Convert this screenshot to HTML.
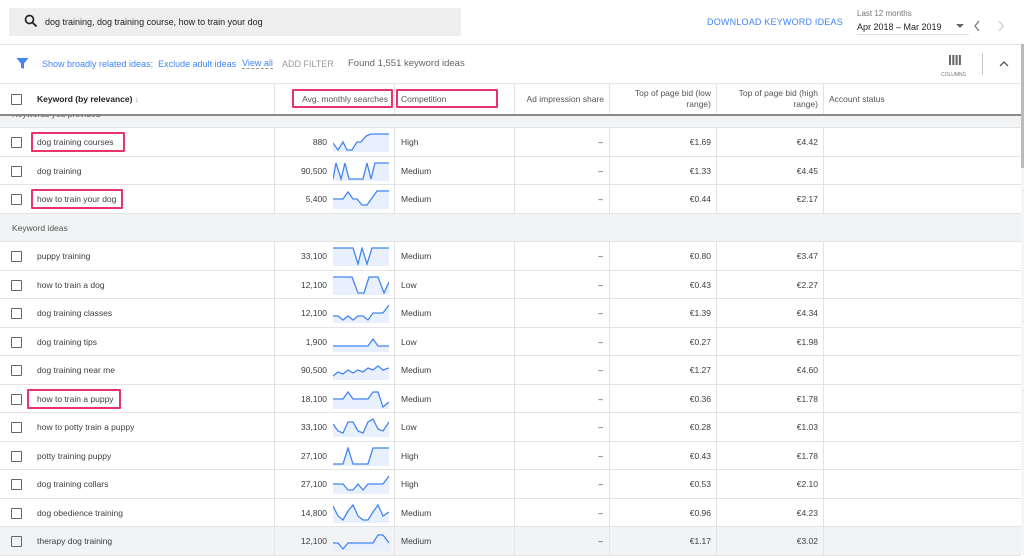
<!DOCTYPE html>
<html><head><meta charset="utf-8"><style>
*{box-sizing:border-box;margin:0;padding:0}
body{width:1024px;height:555px;overflow:hidden;background:#fff;font-family:"Liberation Sans",sans-serif;color:#3c4043;position:relative;font-size:8.5px}
.a{position:absolute}
.row{position:absolute;left:0;width:1021px;height:29px;border-bottom:1px solid #e3e3e3;background:#fff}
.row .c{position:absolute;top:0;height:100%;border-right:1px solid #e3e3e3}
.cb{position:absolute;left:11px;width:11px;height:11px;border:1.5px solid #666;border-radius:1px}
.t{position:absolute;line-height:12px;white-space:nowrap}
.pk{position:absolute;border:2px solid #e8336b;border-radius:1px}
.sec{position:absolute;left:0;width:1021px;background:#f1f3f4;border-bottom:1px solid #e3e3e3}
</style></head><body>
<!-- top bar -->
<div class="a" style="left:9px;top:8px;width:452px;height:28px;background:#eeeeee"></div>
<svg class="a" style="left:24px;top:14px" width="14" height="14" viewBox="0 0 14 14"><circle cx="5.5" cy="5.5" r="4" fill="none" stroke="#222" stroke-width="1.7"/><line x1="8.5" y1="8.5" x2="12.5" y2="12.5" stroke="#222" stroke-width="1.9"/></svg>
<div class="t" style="left:45px;top:16px;font-size:9px;color:#222">dog training, dog training course, how to train your dog</div>
<div class="t" style="left:707px;top:16px;font-size:9px;color:#4285f4;letter-spacing:.2px">DOWNLOAD KEYWORD IDEAS</div>
<div class="t" style="left:857px;top:8px;font-size:8px;color:#777">Last 12 months</div>
<div class="t" style="left:857px;top:21px;font-size:9px;color:#222">Apr 2018 – Mar 2019</div>
<div class="a" style="left:857px;top:34px;width:112px;height:1px;background:#ddd"></div>
<svg class="a" style="left:955px;top:23px" width="10" height="6"><path d="M1 1h8l-4 4z" fill="#666"/></svg>
<svg class="a" style="left:973px;top:20px" width="8" height="12"><path d="M6 1L2 6l4 5" fill="none" stroke="#777" stroke-width="1.3"/></svg>
<svg class="a" style="left:997px;top:20px" width="8" height="12"><path d="M2 1l4 5-4 5" fill="none" stroke="#ccc" stroke-width="1.3"/></svg>
<div class="a" style="left:0;top:44px;width:1024px;height:1px;background:#e8e8e8"></div>
<!-- filter bar -->
<svg class="a" style="left:16px;top:57px" width="13" height="13" viewBox="0 0 13 13"><path d="M0.5 1h12l-4.5 5.5v5.5l-3-1.5v-4z" fill="#4285f4"/></svg>
<div class="t" style="left:42px;top:58px;font-size:9px;color:#4285f4">Show broadly related ideas;&nbsp; Exclude adult ideas</div>
<div class="t" style="left:242px;top:58px;font-size:9px;color:#4285f4;border-bottom:1px dashed #999;line-height:10px">View all</div>
<div class="t" style="left:282px;top:58px;font-size:9px;color:#999">ADD FILTER</div>
<div class="t" style="left:348px;top:58px;font-size:9.5px;color:#666">Found 1,551 keyword ideas</div>
<svg class="a" style="left:949px;top:55px" width="12" height="10"><g fill="#666"><rect x="0" y="0" width="2" height="10"/><rect x="3.3" y="0" width="2" height="10"/><rect x="6.6" y="0" width="2" height="10"/><rect x="9.9" y="0" width="2" height="10"/></g></svg>
<div class="t" style="left:941px;top:69px;font-size:5px;color:#777">COLUMNS</div>
<div class="a" style="left:982px;top:53px;width:1px;height:22px;background:#ccc"></div>
<svg class="a" style="left:999px;top:60px" width="10" height="7"><path d="M1 6l4-4 4 4" fill="none" stroke="#555" stroke-width="1.3"/></svg>
<div class="a" style="left:0;top:83px;width:1024px;height:1px;background:#e8e8e8"></div>
<!-- header -->
<div class="a" style="left:0;top:84px;width:1021px;height:31px;background:#fff"></div>
<div class="a" style="left:274px;top:84px;width:1px;height:31px;background:#e3e3e3"></div>
<div class="a" style="left:394px;top:84px;width:1px;height:31px;background:#e3e3e3"></div>
<div class="a" style="left:514px;top:84px;width:1px;height:31px;background:#e3e3e3"></div>
<div class="a" style="left:609px;top:84px;width:1px;height:31px;background:#e3e3e3"></div>
<div class="a" style="left:716px;top:84px;width:1px;height:31px;background:#e3e3e3"></div>
<div class="a" style="left:823px;top:84px;width:1px;height:31px;background:#e3e3e3"></div>
<div class="cb" style="top:94px"></div>
<div class="t" style="left:37px;top:93px;font-weight:bold;color:#222">Keyword (by relevance) <span style="font-weight:normal;color:#999">↓</span></div>
<div class="t" style="left:292px;top:93px;width:96px;text-align:right;color:#555">Avg. monthly searches</div>
<div class="t" style="left:401px;top:93px;color:#555">Competition</div>
<div class="t" style="left:514px;top:93px;width:90px;text-align:right;color:#555">Ad impression share</div>
<div class="t" style="left:610px;top:88px;width:101px;text-align:right;color:#555;line-height:11px;white-space:normal">Top of page bid (low<br>range)</div>
<div class="t" style="left:717px;top:88px;width:101px;text-align:right;color:#555;line-height:11px;white-space:normal">Top of page bid (high<br>range)</div>
<div class="t" style="left:829px;top:93px;color:#555">Account status</div>
<div class="pk" style="left:292px;top:89px;width:101px;height:19px"></div>
<div class="pk" style="left:396px;top:89px;width:102px;height:19px"></div>
<div class="sec" style="top:115px;height:13px;overflow:hidden"><div class="t" style="left:12px;top:-7px;color:#555">Keywords you provided</div></div>
<div class="a" style="left:0;top:114px;width:1021px;height:1.5px;background:#888"></div>
<div class="sec" style="top:213.5px;height:28.5px"><div class="t" style="left:12px;top:8px;color:#555">Keyword ideas</div></div>
<div id="rows"></div>
<!-- scrollbar -->
<div class="a" style="left:1021px;top:44px;width:3px;height:511px;background:#f5f5f5"></div>
<div class="a" style="left:1021px;top:44px;width:3px;height:124px;background:#bbb"></div>
<script>
var R=[
[128,"dog training courses","880","High","€1.69","€4.42",[31,94],"0,10 5,17 10,9 14,17 19,17 24,9 28,9 33,3 38,1 56,1"],
[156.5,"dog training","90,500","Medium","€1.33","€4.45",0,"0,17 3,1 8,17 12,1 16,17 30,17 34,1 38,17 42,1 56,1"],
[185,"how to train your dog","5,400","Medium","€0.44","€2.17",[31,92],"0,9 10,9 15,2 20,9 24,9 29,15 34,15 44,1 56,1"],
[242,"puppy training","33,100","Medium","€0.80","€3.47",0,"0,1 20,1 25,17 29,1 34,17 39,1 56,1"],
[270.5,"how to train a dog","12,100","Low","€0.43","€2.27",0,"0,1 19,1 25,17 31,17 36,1 45,1 51,17 56,6"],
[299,"dog training classes","12,100","Medium","€1.39","€4.34",0,"0,12 5,12 10,16 15,12 20,16 25,12 30,12 35,16 40,9 50,9 56,1"],
[327.5,"dog training tips","1,900","Low","€0.27","€1.98",0,"0,13 35,13 40,6 45,13 50,13 56,13"],
[356,"dog training near me","90,500","Medium","€1.27","€4.60",0,"0,15 5,11 10,13 15,9 20,12 25,9 30,11 35,7 40,9 45,5 50,9 56,7"],
[384.5,"how to train a puppy","18,100","Medium","€0.36","€1.78",[27,94],"0,9 10,9 15,2 20,9 35,9 40,2 45,2 50,17 56,12"],
[413,"how to potty train a puppy","33,100","Low","€0.28","€1.03",0,"0,6 5,13 10,15 15,4 20,4 25,13 30,15 35,4 40,1 45,11 50,13 56,4"],
[441.5,"potty training puppy","27,100","High","€0.43","€1.78",0,"0,17 10,17 15,1 20,17 35,17 40,1 56,1"],
[470,"dog training collars","27,100","High","€0.53","€2.10",0,"0,9 10,9 15,15 20,15 25,9 30,15 35,9 50,9 56,1"],
[498.5,"dog obedience training","14,800","Medium","€0.96","€4.23",0,"0,2 5,12 10,16 15,7 20,1 25,12 30,16 35,16 40,8 45,1 50,12 56,8"],
[527,"therapy dog training","12,100","Medium","€1.17","€3.02",0,"0,11 5,11 10,17 15,11 40,11 45,3 50,3 56,11"]];
var h="";
R.forEach(function(r,i){
var bg=i==13?"#f1f3f4":"#fff";
h+='<div class="row" style="top:'+r[0]+'px;height:28.5px;background:'+bg+'">';
[274,394,514,609,716,823].forEach(function(x){h+='<div class="c" style="left:0;width:'+(x+1)+'px"></div>';});
h+='<div class="cb" style="top:9px"></div>';
h+='<div class="t" style="left:37px;top:8px">'+r[1]+'</div>';
if(r[6])h+='<div class="pk" style="left:'+r[6][0]+'px;top:4px;width:'+r[6][1]+'px;height:20px"></div>';
h+='<div class="t" style="left:270px;top:8px;width:57px;text-align:right">'+r[2]+'</div>';
h+='<svg style="position:absolute;left:333px;top:5px" width="56" height="19" viewBox="0 0 56 19"><polygon points="0,19 '+r[7]+' 56,19" fill="#e8f0fe"/><polyline points="'+r[7]+'" fill="none" stroke="#4285f4" stroke-width="1.3"/></svg>';
h+='<div class="t" style="left:401px;top:8px">'+r[3]+'</div>';
h+='<div class="t" style="left:514px;top:8px;width:89px;text-align:right">–</div>';
h+='<div class="t" style="left:610px;top:8px;width:101px;text-align:right">'+r[4]+'</div>';
h+='<div class="t" style="left:717px;top:8px;width:101px;text-align:right">'+r[5]+'</div>';
h+='</div>';});
document.getElementById("rows").innerHTML=h;
</script>
</body></html>
